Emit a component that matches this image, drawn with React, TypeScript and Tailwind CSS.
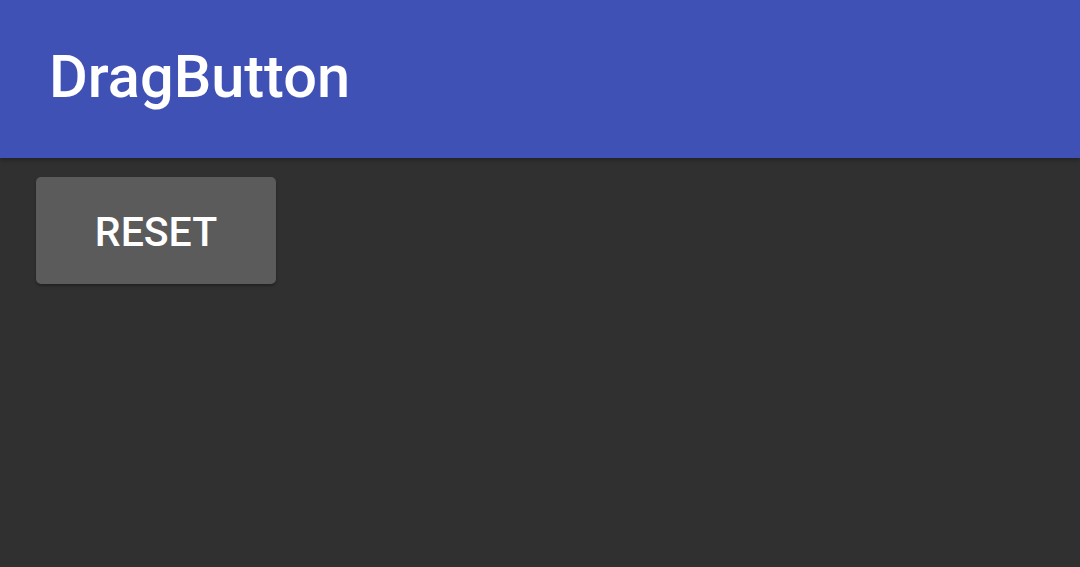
export default function App() {
  return (
    <div className="w-[1080px] h-[567px] bg-[#303030] flex flex-col overflow-hidden" style={{ fontFamily: 'Roboto, "Noto Sans", sans-serif' }}>
      <header className="h-[158px] bg-[#3f51b5] flex items-center pl-[49px] pb-[3px] shadow-[0_2px_4px_rgba(0,0,0,0.3)] relative z-10">
        <h1 className="text-white text-[59.5px] font-medium leading-none tracking-[0px]">DragButton</h1>
      </header>
      <div className="pt-[19px] pl-[36px]">
        <button className="w-[240px] h-[107px] bg-[#5b5b5c] rounded-[5px] text-white text-[41px] font-medium leading-none flex items-center justify-center pt-[3px] shadow-[0_2px_3px_rgba(0,0,0,0.3)]">
          RESET
        </button>
      </div>
    </div>
  );
}
